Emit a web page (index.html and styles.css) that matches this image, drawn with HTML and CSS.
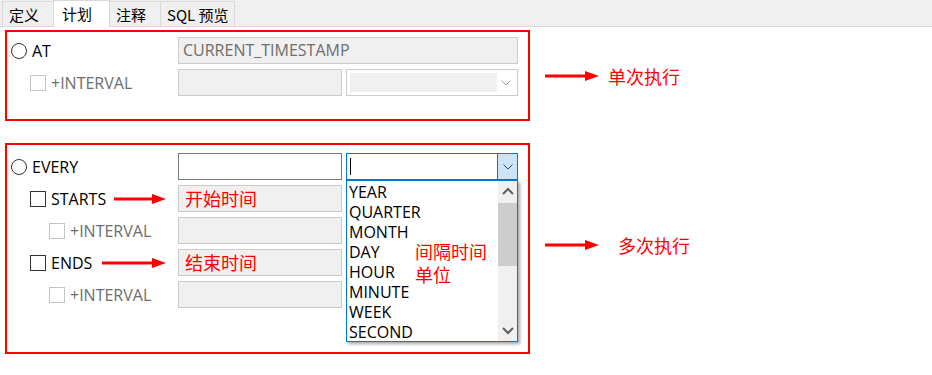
FILE: index.html
```html
<!DOCTYPE html>
<html lang="zh-CN">
<head>
  <meta charset="UTF-8" />
  <title>计划</title>
  <link rel="stylesheet" href="styles.css">
</head>
<body>
  <div class="tabs">
    <div class="tab">定义</div>
    <div class="tab active">计划</div>
    <div class="tab">注释</div>
    <div class="tab">SQL 预览</div>
  </div>

  <div class="panel">
    <div class="group">
      <div class="box box-once">
        <div class="label lv0"><span class="radio"></span><span>AT</span></div>
        <div class="field off wide">CURRENT_TIMESTAMP</div>

        <div class="label lv1 dim"><span class="check off"></span><span>+INTERVAL</span></div>
        <div class="field off"></div>
        <div class="combo off">
          <div class="combo-fill"></div>
          <svg class="chev" width="10" height="6" viewBox="0 0 10 6"><path d="M0.5 0.5 L5 5 L9.5 0.5" fill="none" stroke="#9a9a9a" stroke-width="1"/></svg>
        </div>
      </div>
      <div class="note">
        <svg class="arrow" width="54" height="12" viewBox="0 0 54 12"><path d="M0 6 H42" stroke="#f00" stroke-width="3"/><path d="M40 1 L54 6 L40 11 Z" fill="#f00"/></svg>
        <span>单次执行</span>
      </div>
    </div>

    <div class="group">
      <div class="box box-every">
        <div class="label lv0"><span class="radio"></span><span>EVERY</span></div>
        <div class="field on"></div>
        <div class="combo focus">
          <span class="caret"></span>
          <div class="combo-btn">
            <svg width="10" height="6" viewBox="0 0 10 6"><path d="M0.5 0.5 L5 5 L9.5 0.5" fill="none" stroke="#444" stroke-width="1"/></svg>
          </div>
          <div class="list">
            <div class="item">YEAR</div>
            <div class="item">QUARTER</div>
            <div class="item">MONTH</div>
            <div class="item">DAY</div>
            <div class="item">HOUR</div>
            <div class="item">MINUTE</div>
            <div class="item">WEEK</div>
            <div class="item">SECOND</div>
            <div class="scroll">
              <svg class="sc-up" width="12" height="8" viewBox="0 0 12 8"><path d="M1 7 L6 2 L11 7" fill="none" stroke="#606060" stroke-width="2"/></svg>
              <div class="thumb"></div>
              <svg class="sc-down" width="12" height="8" viewBox="0 0 12 8"><path d="M1 1 L6 6 L11 1" fill="none" stroke="#606060" stroke-width="2"/></svg>
            </div>
            <div class="list-note">间隔时间<br>单位</div>
          </div>
        </div>

        <div class="label lv1">
          <span class="check"></span><span>STARTS</span>
          <svg class="arrow in-starts" width="52" height="10" viewBox="0 0 52 10"><path d="M0 5 H40" stroke="#f00" stroke-width="3"/><path d="M38 0 L52 5 L38 10 Z" fill="#f00"/></svg>
        </div>
        <div class="field off mark">开始时间</div>
        <div></div>

        <div class="label lv2 dim"><span class="check off"></span><span>+INTERVAL</span></div>
        <div class="field off"></div>
        <div></div>

        <div class="label lv1">
          <span class="check"></span><span>ENDS</span>
          <svg class="arrow in-ends" width="64" height="10" viewBox="0 0 64 10"><path d="M0 5 H52" stroke="#f00" stroke-width="3"/><path d="M50 0 L64 5 L50 10 Z" fill="#f00"/></svg>
        </div>
        <div class="field off mark">结束时间</div>
        <div></div>

        <div class="label lv2 dim"><span class="check off"></span><span>+INTERVAL</span></div>
        <div class="field off"></div>
        <div></div>
      </div>
      <div class="note note-many">
        <svg class="arrow" width="54" height="12" viewBox="0 0 54 12"><path d="M0 6 H42" stroke="#f00" stroke-width="3"/><path d="M40 1 L54 6 L40 11 Z" fill="#f00"/></svg>
        <span>多次执行</span>
      </div>
    </div>
  </div>
</body>
</html>
```

FILE: styles.css
```css
body {
  margin: 0;
  font-family: "Open Sans", "Noto Sans CJK SC", sans-serif;
  font-size: 16px;
  color: #000;
  background: #fff;
  width: 932px;
  height: 375px;
  overflow: hidden;
}
.tabs {
  display: flex;
  align-items: flex-end;
  height: 26px;
  padding-left: 2px;
  background: #f0f0f0;
  border-bottom: 1px solid #d9d9d9;
}
.tab {
  height: 25px;
  box-sizing: border-box;
  min-width: 52px;
  padding: 0 5px 0 6px;
  border: 1px solid #d9d9d9;
  border-bottom: none;
  margin-right: -1px;
  font-family: "Noto Sans CJK SC", sans-serif;
  font-size: 15px;
  line-height: 25px;
  background: #f0f0f0;
}
.tab.active {
  height: 27px;
  min-width: 57px;
  padding-left: 8px;
  margin-bottom: -1px;
  background: #fff;
  position: relative;
}

.panel {
  padding: 3px 0 0 5px;
}
.group {
  display: flex;
  align-items: center;
  margin-bottom: 22px;
}
.box {
  width: 525px;
  box-sizing: border-box;
  border: 2px solid #f00;
  display: grid;
  grid-template-columns: 167px 164px 172px;
  grid-auto-rows: 27px;
  column-gap: 4px;
  row-gap: 5px;
}
.box-once {
  padding: 5px 0 23px 0;
}
.box-every {
  padding: 8px 0 44px 0;
}

.label {
  display: flex;
  align-items: center;
  gap: 5px;
  white-space: nowrap;
}
.lv0 { padding-left: 4px; }
.lv1 { padding-left: 23px; }
.lv2 { padding-left: 42px; }
.dim { color: #6d6d6d; }

.radio {
  width: 14px;
  height: 14px;
  border: 1px solid #333;
  border-radius: 50%;
  flex: none;
}
.check {
  width: 14px;
  height: 14px;
  border: 1px solid #333;
  flex: none;
}
.check.off {
  border-color: #c4c4c4;
}

.field {
  box-sizing: border-box;
  height: 27px;
  line-height: 25px;
  padding-left: 4px;
  border: 1px solid #cccccc;
  background: #f0f0f0;
  color: #6d6d6d;
  white-space: nowrap;
  overflow: hidden;
}
.field.wide {
  grid-column: 2 / 4;
}
.field.on {
  border-color: #7a7a7a;
  background: #fff;
}
.field.mark {
  color: #f00;
  font-family: "Noto Sans CJK SC", sans-serif;
  font-size: 18px;
  padding-left: 6px;
}

.combo {
  box-sizing: border-box;
  height: 27px;
  position: relative;
  display: flex;
  align-items: center;
}
.combo.off {
  border: 1px solid #cccccc;
  background: #fff;
  padding: 3px;
}
.combo-fill {
  flex: 1;
  align-self: stretch;
  background: #f0f0f0;
  margin-right: 17px;
}
.combo .chev {
  position: absolute;
  right: 6px;
  top: 10px;
}
.combo.focus {
  border: 1px solid #0078d7;
  background: #fff;
}
.caret {
  width: 1px;
  height: 17px;
  margin-left: 3px;
  background: #000;
}
.combo-btn {
  margin-left: auto;
  align-self: stretch;
  width: 19px;
  border-left: 1px solid #0078d7;
  background: #cce4f7;
  display: flex;
  align-items: center;
  justify-content: center;
}

.list {
  position: absolute;
  left: -1px;
  top: 26px;
  width: 172px;
  height: 162px;
  box-sizing: border-box;
  padding-top: 1px;
  border: 1px solid #0078d7;
  background: #fff;
  box-shadow: 2px 2px 3px rgba(0, 0, 0, 0.35);
  z-index: 2;
}
.item {
  height: 20px;
  line-height: 20px;
  padding-left: 2px;
}
.scroll {
  position: absolute;
  top: 0;
  right: 0;
  bottom: 0;
  width: 19px;
  background: #f0f0f0;
}
.sc-up {
  position: absolute;
  left: 4px;
  top: 6px;
}
.thumb {
  position: absolute;
  left: 0;
  right: 0;
  top: 22px;
  height: 63px;
  background: #cdcdcd;
}
.sc-down {
  position: absolute;
  left: 4px;
  bottom: 6px;
}
.list-note {
  position: absolute;
  left: 68px;
  top: 59px;
  color: #f00;
  font-family: "Noto Sans CJK SC", sans-serif;
  font-size: 18px;
  line-height: 23px;
}

.arrow {
  flex: none;
}
.in-starts {
  margin-left: 3px;
}
.in-ends {
  margin-left: 5px;
}

.note {
  display: flex;
  align-items: center;
  margin-left: 15px;
  color: #f00;
  font-family: "Noto Sans CJK SC", sans-serif;
  font-size: 18px;
}
.note span {
  margin-left: 9px;
}
.note-many {
  margin-bottom: 8px;
}
.note-many span {
  margin-left: 19px;
}
```
